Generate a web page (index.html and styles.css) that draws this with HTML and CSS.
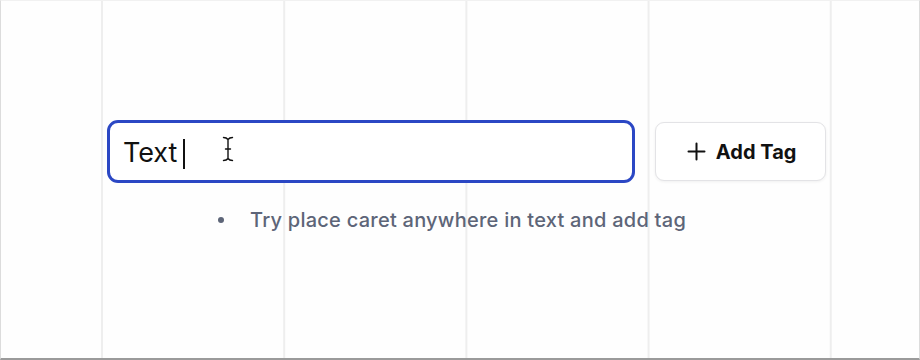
FILE: index.html
```html
<!DOCTYPE html>
<html lang="en">
<head>
<meta charset="utf-8">
<title>Tag input</title>
<link rel="stylesheet" href="styles.css">
</head>
<body>
<div class="frame">
  <div class="demo">
    <div class="row">
      <div class="field">
        <span class="value">Text</span><span class="caret"></span>
        <svg class="ibeam" width="12" height="26" viewBox="0 0 12 26" aria-hidden="true">
          <path d="M1.5 1.5 Q4.5 1.5 6 3.5 Q7.5 1.5 10.5 1.5 M6 3.5 V22.5 M1.5 24.5 Q4.5 24.5 6 22.5 Q7.5 24.5 10.5 24.5 M3.5 13 H8.5" fill="none" stroke="#fff" stroke-width="3.2" stroke-linecap="round"/>
          <path d="M1.5 1.5 Q4.5 1.5 6 3.5 Q7.5 1.5 10.5 1.5 M6 3.5 V22.5 M1.5 24.5 Q4.5 24.5 6 22.5 Q7.5 24.5 10.5 24.5 M3.5 13 H8.5" fill="none" stroke="#111" stroke-width="1.4" stroke-linecap="round"/>
        </svg>
      </div>
      <button class="add-btn" type="button">
        <svg class="plus" width="19" height="19" viewBox="0 0 19 19" aria-hidden="true">
          <path d="M9.5 1.5V17.5M1.5 9.5H17.5" stroke="#111" stroke-width="2" stroke-linecap="round"/>
        </svg>
        <span>Add Tag</span>
      </button>
    </div>
    <ul class="hints">
      <li class="hint"><span class="dot"></span><span>Try place caret anywhere in text and add tag</span></li>
    </ul>
  </div>
</div>
</body>
</html>
```

FILE: styles.css
```css
html, body {
  margin: 0;
  padding: 0;
  background: #ffffff;
}

body {
  font-family: Inter, "Noto Sans", "Liberation Sans", sans-serif;
}

.frame {
  box-sizing: border-box;
  width: 920px;
  height: 360px;
  border-left: 1px solid #dcdcdc;
  border-right: 1px solid #dcdcdc;
  border-top: 1px solid #f1f1f1;
  border-bottom: 2px solid #9a9a9a;
  background-color: #fefefe;
  background-image: linear-gradient(to right, #eeeeee 0, #eeeeee 1.5px, transparent 1.5px);
  background-size: 182.2px 100%;
  background-position: 100px 0;
  padding-top: 119px;
}

.demo {
  display: flex;
  flex-direction: column;
  margin-left: 106px;
  width: 719px;
}

.row {
  display: flex;
  align-items: center;
  gap: 20px;
}

.field {
  box-sizing: border-box;
  width: 529px;
  height: 63px;
  border: 3px solid #2b47c4;
  border-radius: 11px;
  background: #ffffff;
  display: flex;
  align-items: center;
  padding-left: 13px;
}

.value {
  font-size: 27px;
  font-weight: 400;
  color: #111111;
  letter-spacing: -0.1px;
  margin-top: 1px;
}

.caret {
  width: 1.5px;
  height: 30px;
  background: #111;
  margin-left: 6px;
  margin-top: 4px;
}

.ibeam {
  margin-left: 37px;
  margin-top: -6px;
}

.add-btn {
  box-sizing: border-box;
  width: 171px;
  height: 59px;
  border: 1px solid #e3e3e6;
  border-radius: 9px;
  background: #ffffff;
  box-shadow: 0 1px 3px rgba(0, 0, 0, 0.06);
  display: flex;
  align-items: center;
  justify-content: center;
  gap: 10px;
  font-family: Inter, "Noto Sans", "Liberation Sans", sans-serif;
  font-size: 20px;
  font-weight: 700;
  color: #111111;
  padding: 0 0 0 2px;
}

.plus {
  display: block;
}

.hints {
  list-style: none;
  margin: 0;
  padding: 0;
  margin-top: 25px;
}

.hint {
  display: flex;
  align-items: center;
  margin-left: 111px;
  font-size: 20px;
  font-weight: 500;
  letter-spacing: 0.25px;
  color: #5d6578;
}

.dot {
  width: 6px;
  height: 6px;
  border-radius: 50%;
  background: #5d6578;
  margin-right: 26px;
}
```
